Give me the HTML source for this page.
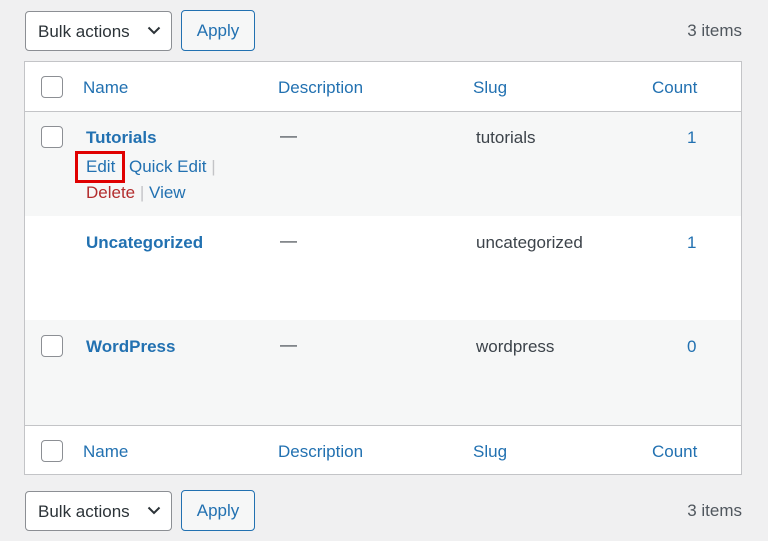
<!DOCTYPE html>
<html><head><style>
body{margin:0;width:768px;height:541px;background:#f0f0f1;font-family:"Liberation Sans",sans-serif;font-size:17px;position:relative;overflow:hidden;color:#3c434a}
.a{position:absolute;white-space:nowrap}
.sel{position:absolute;left:25px;width:147px;height:40px;border:1px solid #8c8f94;border-radius:4px;background:#fff;box-sizing:border-box}
.sel span{position:absolute;left:12px;top:10px;color:#2c3338}
.sel svg{position:absolute;right:10px;top:14px}
.btn{position:absolute;left:181px;width:74px;height:41px;border:1px solid #2271b1;border-radius:4px;background:#f6f7f7;box-sizing:border-box;color:#2271b1;text-align:center;line-height:39px}
.tbl{position:absolute;left:24px;top:61px;width:718px;height:414px;border:1px solid #c3c4c7;box-sizing:border-box;background:#fff}
.row{position:absolute;left:0;right:0}
.cb{position:absolute;left:16px;width:20px;height:20px;border:1px solid #8c8f94;border-radius:4px;background:#fff}
.l{color:#2271b1}
.b{font-weight:bold;color:#2271b1}
</style></head><body>
<div class="sel" style="top:11px"><span>Bulk actions</span><svg width="14" height="9" viewBox="0 0 14 9"><path d="M1.5 1.5L7 7 12.5 1.5" fill="none" stroke="#2c3338" stroke-width="2"/></svg></div>
<div class="btn" style="top:10px">Apply</div>
<div class="a" style="right:26px;top:21px;color:#50575e">3 items</div>

<div class="tbl">
 <div class="row" style="top:0;height:49px;border-bottom:1px solid #c3c4c7">
  <div class="cb" style="top:14px"></div>
  <div class="a l" style="left:58px;top:16px">Name</div>
  <div class="a l" style="left:253px;top:16px">Description</div>
  <div class="a l" style="left:448px;top:16px">Slug</div>
  <div class="a l" style="left:627px;top:16px">Count</div>
 </div>
 <div class="row" style="top:50px;height:104px;background:#f6f7f7">
  <div class="cb" style="top:14px"></div>
  <div class="a b" style="left:61px;top:16px">Tutorials</div>
  <div class="a" style="left:255px;top:14px">—</div>
  <div class="a" style="left:451px;top:16px">tutorials</div>
  <div class="a l" style="left:662px;top:16px">1</div>
  <div class="a" style="left:50px;top:39px;width:44px;height:26px;border:3px solid #e00000"></div>
  <div class="a l" style="left:61px;top:45px">Edit</div>
  <div class="a" style="left:104px;top:45px"><span class="l">Quick Edit</span> <span style="color:#c3c4c7">|</span></div>
  <div class="a" style="left:61px;top:71px"><span style="color:#b32d2e">Delete</span> <span style="color:#c3c4c7">|</span> <span class="l">View</span></div>
 </div>
 <div class="row" style="top:154px;height:104px;background:#fff">
  <div class="a b" style="left:61px;top:17px">Uncategorized</div>
  <div class="a" style="left:255px;top:15px">—</div>
  <div class="a" style="left:451px;top:17px">uncategorized</div>
  <div class="a l" style="left:662px;top:17px">1</div>
 </div>
 <div class="row" style="top:258px;height:105px;background:#f6f7f7;border-bottom:1px solid #c3c4c7">
  <div class="cb" style="top:15px"></div>
  <div class="a b" style="left:61px;top:17px">WordPress</div>
  <div class="a" style="left:255px;top:15px">—</div>
  <div class="a" style="left:451px;top:17px">wordpress</div>
  <div class="a l" style="left:662px;top:17px">0</div>
 </div>
 <div class="row" style="top:364px;height:49px">
  <div class="cb" style="top:14px"></div>
  <div class="a l" style="left:58px;top:16px">Name</div>
  <div class="a l" style="left:253px;top:16px">Description</div>
  <div class="a l" style="left:448px;top:16px">Slug</div>
  <div class="a l" style="left:627px;top:16px">Count</div>
 </div>
</div>

<div class="sel" style="top:491px"><span>Bulk actions</span><svg width="14" height="9" viewBox="0 0 14 9"><path d="M1.5 1.5L7 7 12.5 1.5" fill="none" stroke="#2c3338" stroke-width="2"/></svg></div>
<div class="btn" style="top:490px">Apply</div>
<div class="a" style="right:26px;top:501px;color:#50575e">3 items</div>
</body></html>
